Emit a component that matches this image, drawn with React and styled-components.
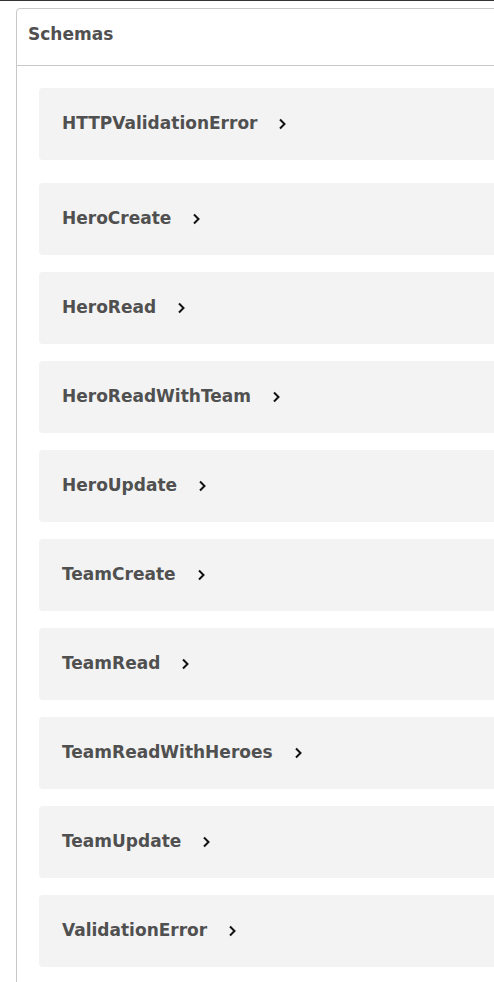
import React from 'react';
import styled, { createGlobalStyle } from 'styled-components';

const GlobalStyle = createGlobalStyle`
  html, body {
    margin: 0;
    padding: 0;
    background: #fff;
    overflow: hidden;
  }
  body {
    border-top: 1px solid #333;
    font-family: "DejaVu Sans", Verdana, sans-serif;
  }
`;

const Page = styled.div`
  padding: 7px 0 0 16px;
  width: 494px;
  box-sizing: border-box;
  overflow: hidden;
`;

const Section = styled.section`
  width: 640px;
  border: 1px solid #c8c8c8;
  border-radius: 4px;
  box-sizing: border-box;
  padding-bottom: 20px;
`;

const Header = styled.h4`
  margin: 0;
  height: 57px;
  display: flex;
  align-items: center;
  padding: 0 11px 7px;
  box-sizing: border-box;
  border-bottom: 1px solid #c8c8c8;
  font-size: 17px;
  font-weight: bold;
  color: #505050;
`;

const List = styled.div`
  display: flex;
  flex-direction: column;
  padding: 22px 0 0 22px;
`;

const Model = styled.div`
  height: 72px;
  margin-bottom: ${p => (p.$first ? 23 : 17)}px;
  background: #f3f3f3;
  border-radius: 4px;
  display: flex;
  align-items: center;
  padding: 0 0 2px 23px;
  box-sizing: border-box;
`;

const Title = styled.span`
  font-size: 17px;
  font-weight: bold;
  color: #505050;
`;

const Chevron = styled.svg`
  margin: 2px 0 0 20px;
  width: 10px;
  height: 12px;
`;

const models = [
  'HTTPValidationError',
  'HeroCreate',
  'HeroRead',
  'HeroReadWithTeam',
  'HeroUpdate',
  'TeamCreate',
  'TeamRead',
  'TeamReadWithHeroes',
  'TeamUpdate',
  'ValidationError',
];

export default function App() {
  return (
    <Page>
      <GlobalStyle />
      <Section>
        <Header>Schemas</Header>
        <List>
          {models.map((name, i) => (
            <Model key={name} $first={i === 0}>
              <Title>{name}</Title>
              <Chevron viewBox="0 0 10 12">
                <path d="M3 1.5 L7.5 6 L3 10.5" fill="none" stroke="#111" strokeWidth="2" />
              </Chevron>
            </Model>
          ))}
        </List>
      </Section>
    </Page>
  );
}
